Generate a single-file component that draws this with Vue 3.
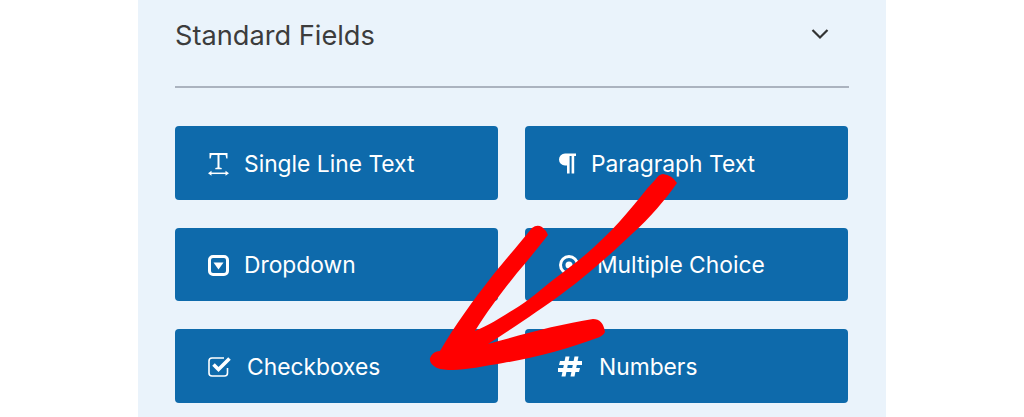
<script setup>
const fields = [
  { label: 'Single Line Text', icon: 'text', w: 21 },
  { label: 'Paragraph Text', icon: 'paragraph', w: 18 },
  { label: 'Dropdown', icon: 'dropdown', w: 21 },
  { label: 'Multiple Choice', icon: 'radio', w: 24 },
  { label: 'Checkboxes', icon: 'checkbox', w: 24 },
  { label: 'Numbers', icon: 'hash', w: 26 }
]
</script>

<template>
  <div class="page">
    <section class="panel">
      <div class="header">
        <h2>Standard Fields</h2>
        <svg class="chevron" width="18" height="12" viewBox="0 0 18 12">
          <path d="M1.500 2 9 9.500 16.500 2" fill="none" stroke="#333" stroke-width="2.200" />
        </svg>
      </div>
      <div class="grid">
        <button v-for="field in fields" :key="field.label" class="field">
          <svg :width="field.w" height="26" :viewBox="`0 0 ${field.w} 26`" fill="#fff">
            <template v-if="field.icon === 'text'">
              <path d="M1.500 3h18v5.500h-1.200l-.8-3.500h-6v12.500l2.200.5v1.300H7.300V18l2.200-.5V5h-6l-.8 3.500H1.500z" />
              <path d="M3 23.300h15" stroke="#fff" stroke-width="1.500" />
              <path d="M0 23.300l3.500-2.500v5zM21 23.300l-3.500-2.500v5z" />
            </template>
            <template v-else-if="field.icon === 'paragraph'">
              <path d="M7 3.500h11v2.500h-1.800v17.500h-2.600V6h-2v17.500H9V15.500H7A6 6 0 0 1 7 3.500z" />
            </template>
            <template v-else-if="field.icon === 'dropdown'">
              <rect x="1.500" y="4.500" width="18" height="18" rx="3.500" fill="none" stroke="#fff" stroke-width="3" />
              <path d="M5.500 10.500h10l-5 7z" />
            </template>
            <template v-else-if="field.icon === 'radio'">
              <circle cx="11" cy="13" r="8.500" fill="none" stroke="#fff" stroke-width="3" />
              <circle cx="11" cy="13" r="3.500" />
            </template>
            <template v-else-if="field.icon === 'checkbox'">
              <path d="M19.500 15v5a3 3 0 0 1-3 3H4a3 3 0 0 1-3-3V8a3 3 0 0 1 3-3h12" fill="none" stroke="#fff" stroke-width="1.600" />
              <path d="M5.500 11.500 10.500 16.500 21.500 5.500" fill="none" stroke="#fff" stroke-width="3.600" />
            </template>
            <template v-else>
              <path d="M7.500 3.500h4l-4 20h-4zM16.500 3.500h4l-4 20h-4z" />
              <path d="M2 8h22v4H1zM0 15h22l-1 4H0z" />
            </template>
          </svg>
          <span>{{ field.label }}</span>
        </button>
      </div>
      <svg class="arrow" width="1024" height="417" viewBox="0 0 1024 417">
        <path
          fill="#f00"
          d="M655 180Q659 174 663 174Q672 175 677 183C665 200 650 218 633 233C612 253 585 277 563 293C540 310 510 330 488 344C520 335 560 324 593 319Q603 319 605 332Q603 336 597 338C570 348 535 358 503 363C485 366 465 370 453 370Q443 370 437 368Q429 364 430 358Q433 351 440 351C455 325 472 302 493 275C505 260 520 243 532 228Q537 224 542 227Q546 230 548 235C538 248 528 260 517 273C505 288 488 310 475 331C490 325 500 318 513 310C530 300 540 290 553 280C570 267 582 258 593 248C605 237 617 225 627 213C637 202 645 190 655 180Z"
        />
      </svg>
    </section>
  </div>
</template>

<style scoped>
.page {
  width: 1024px;
  height: 417px;
  overflow: hidden;
  background: #fff;
  font-family: Inter, "Liberation Sans", sans-serif;
}

.panel {
  width: 748px;
  height: 417px;
  margin-left: 138px;
  box-sizing: border-box;
  padding: 0 38px 0 37px;
  background: #eaf3fb;
}

.header {
  height: 88px;
  margin-right: -1px;
  box-sizing: border-box;
  display: flex;
  justify-content: space-between;
  border-bottom: 2px solid #abb3bf;
}

h2 {
  margin: 18px 0 0;
  font-size: 27.2px;
  line-height: 36px;
  font-weight: 400;
  color: #3c3c3c;
}

.chevron {
  margin: 28px 20px 0 0;
}

.grid {
  display: grid;
  grid-template-columns: 323px 323px;
  justify-content: space-between;
  row-gap: 28px;
  margin-top: 38px;
}

.field {
  height: 73.500px;
  display: flex;
  align-items: center;
  gap: 15px;
  padding: 1px 0 0 33px;
  border: 0;
  border-radius: 4px;
  background: #0e6aab;
  color: #fff;
  font: inherit;
  font-size: 22.800px;
}

.arrow {
  position: absolute;
  top: 0;
  left: 0;
}
</style>
